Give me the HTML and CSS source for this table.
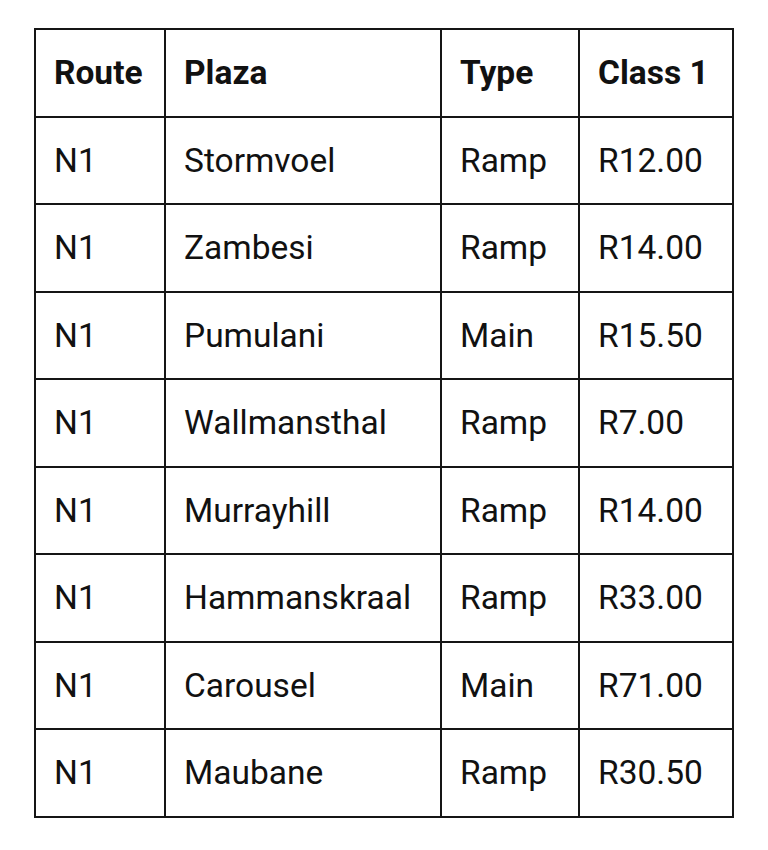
FILE: index.html
```html
<!DOCTYPE html>
<html>
<head>
<meta charset="utf-8">
<link rel="stylesheet" href="styles.css">
</head>
<body>
<table class="tolls">
  <colgroup>
    <col class="c-route">
    <col class="c-plaza">
    <col class="c-type">
    <col class="c-class">
  </colgroup>
  <thead>
    <tr><th>Route</th><th>Plaza</th><th>Type</th><th>Class 1</th></tr>
  </thead>
  <tbody>
    <tr><td>N1</td><td>Stormvoel</td><td>Ramp</td><td>R12.00</td></tr>
    <tr><td>N1</td><td>Zambesi</td><td>Ramp</td><td>R14.00</td></tr>
    <tr><td>N1</td><td>Pumulani</td><td>Main</td><td>R15.50</td></tr>
    <tr><td>N1</td><td>Wallmansthal</td><td>Ramp</td><td>R7.00</td></tr>
    <tr><td>N1</td><td>Murrayhill</td><td>Ramp</td><td>R14.00</td></tr>
    <tr><td>N1</td><td>Hammanskraal</td><td>Ramp</td><td>R33.00</td></tr>
    <tr><td>N1</td><td>Carousel</td><td>Main</td><td>R71.00</td></tr>
    <tr><td>N1</td><td>Maubane</td><td>Ramp</td><td>R30.50</td></tr>
  </tbody>
</table>
</body>
</html>
```
FILE: styles.css
```css
html, body {
  margin: 0;
  padding: 0;
  background: #ffffff;
}
body {
  padding: 28px 0 0 34px;
  font-family: Roboto, "Liberation Sans", sans-serif;
  color: #111111;
}
.tolls {
  border-collapse: collapse;
  table-layout: fixed;
  width: 700px;
  font-size: 33.5px;
}
.c-route { width: 130px; }
.c-plaza { width: 276px; }
.c-type { width: 138px; }
.c-class { width: 154px; }
.tolls th,
.tolls td {
  border: 2px solid #151515;
  height: 85.5px;
  padding: 0 0 0 18px;
  text-align: left;
  vertical-align: middle;
  white-space: nowrap;
}
.tolls th {
  font-weight: 700;
}
.tolls td {
  font-weight: 400;
}
```
